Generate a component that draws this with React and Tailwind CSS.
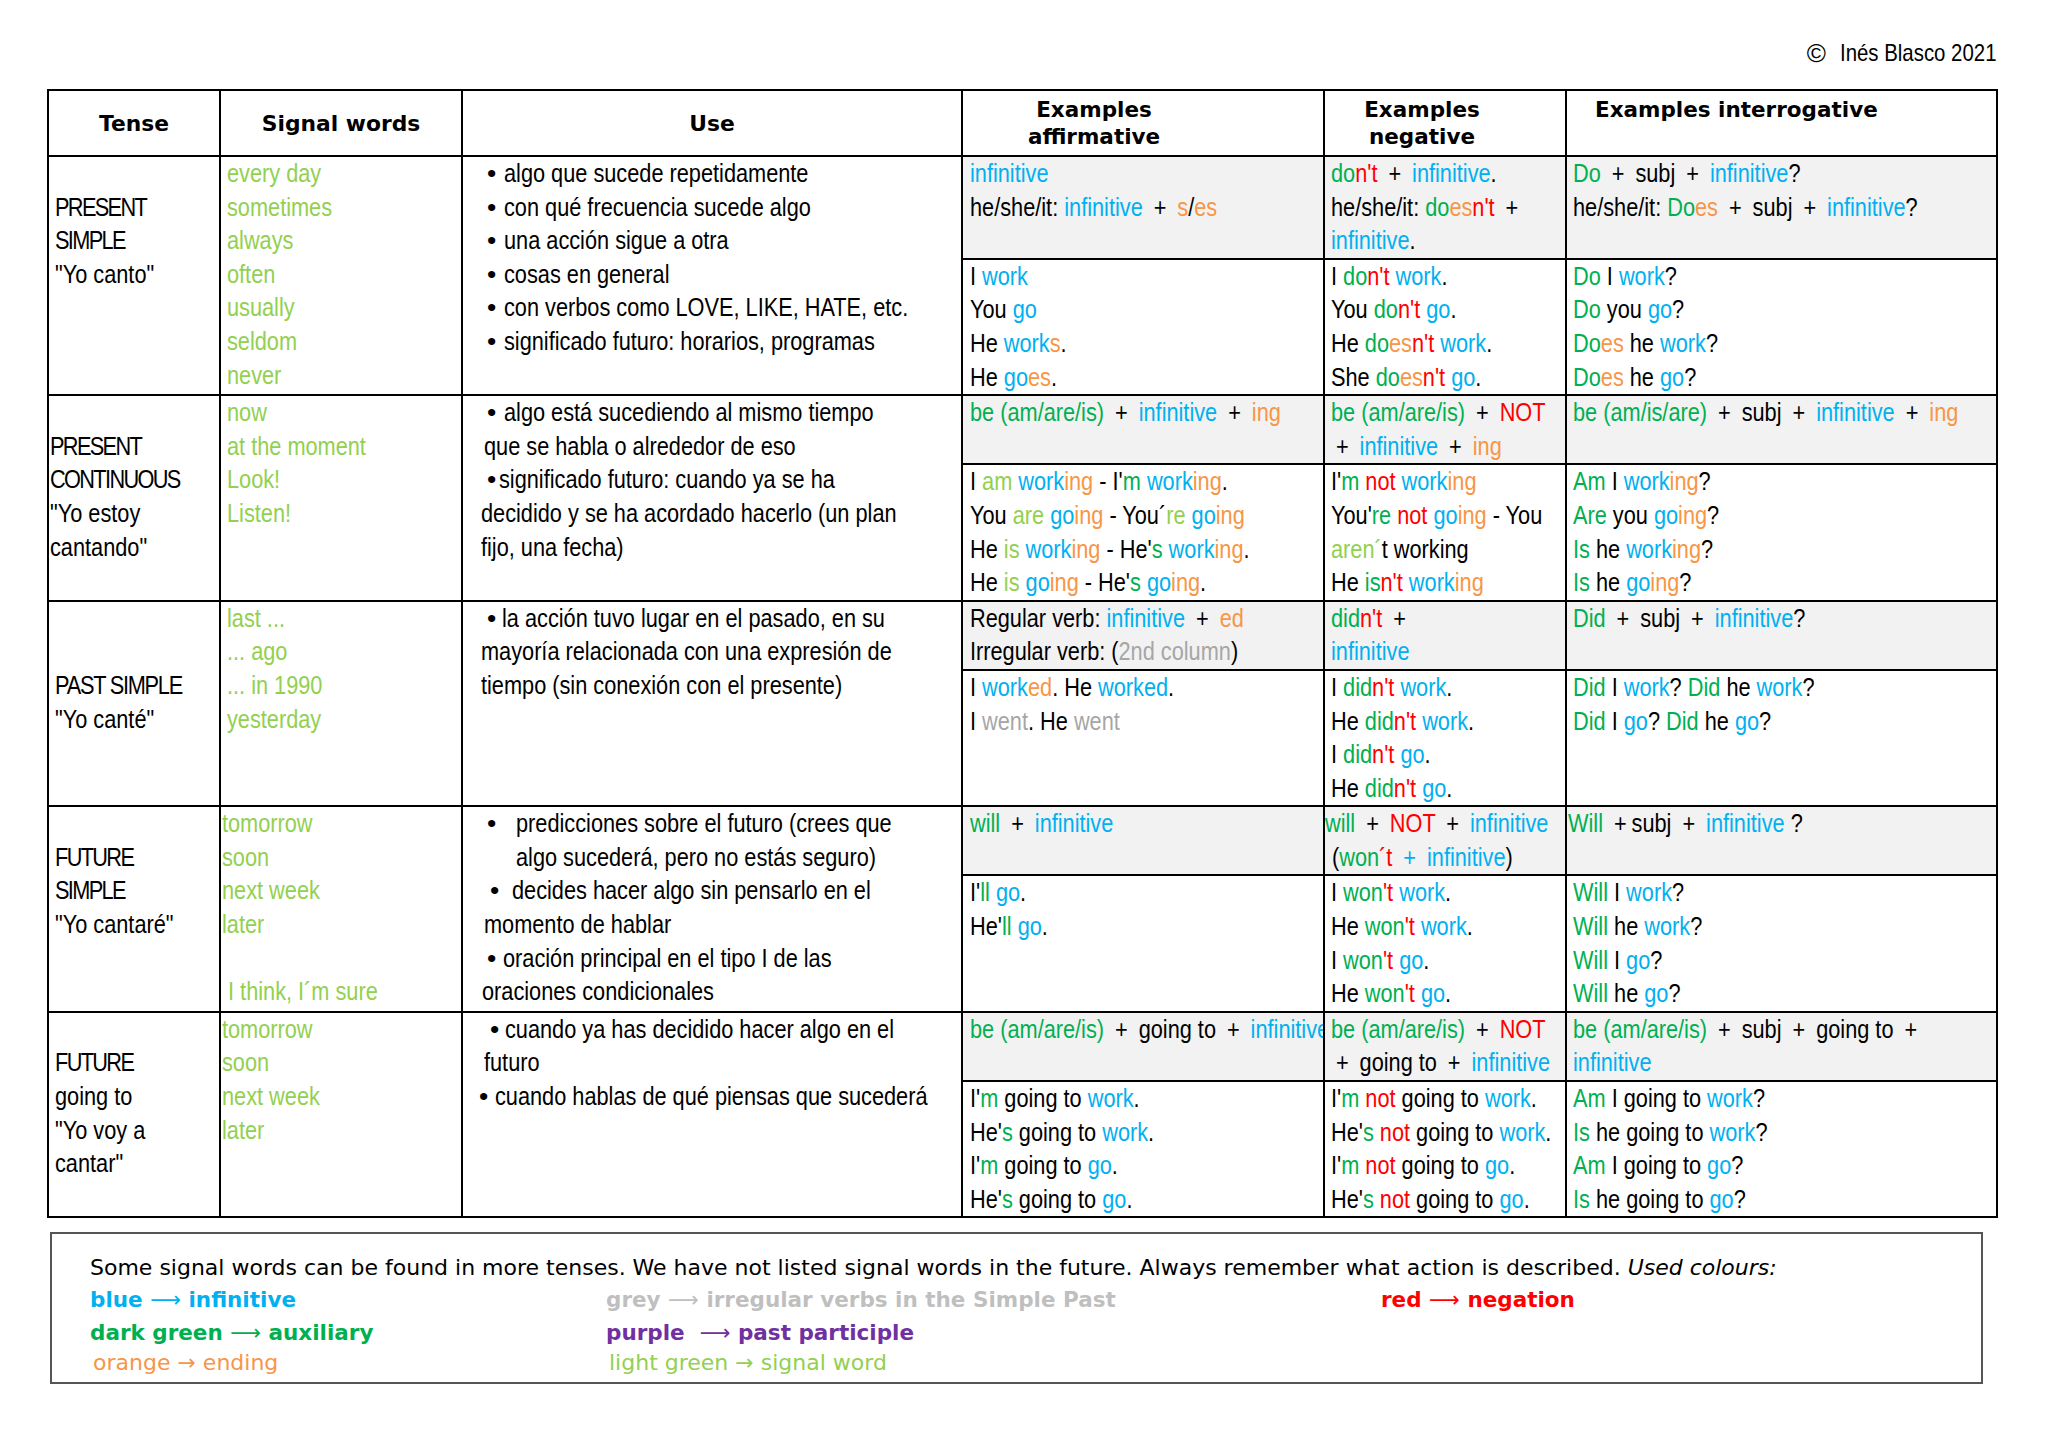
const C = {
  k: "text-black",
  b: "text-[#00b0f0]",
  g: "text-[#00b050]",
  r: "text-[#ff0000]",
  o: "text-[#f79646]",
  y: "text-[#a6a6a6]",
  l: "text-[#92d050]",
};

// no narrow face is installed, so Liberation Sans is squeezed to Arial Narrow proportions
const narrow = "origin-left scale-x-[0.82] whitespace-pre";

// "[g]do[r]n't[k] + [b]infinitive" -> coloured spans, "+" gets a bit of air like the original
const Line = ({ s, cls = "" }) => {
  const parts = s.split(/\[([kbgroyl])\]/);
  let color = "k";
  const out = [];
  parts.forEach((p, i) => {
    if (i % 2) {
      color = p;
      return;
    }
    p.split(/(\+)/).forEach((q, j) => {
      if (!q) return;
      out.push(
        <span key={i + "-" + j} className={q === "+" ? C[color] + " px-[6px]" : C[color]}>
          {q}
        </span>
      );
    });
  });
  return <div className={"h-[33.6px] " + narrow + " " + cls}>{out}</div>;
};

const Lines = ({ lines, ml }) =>
  lines.map((l, i) =>
    Array.isArray(l) ? <Line key={i} s={l[0]} cls={l[1]} /> : <Line key={i} s={l} cls={ml} />
  );

const UseLine = ({ ml, bw, t }) => (
  <div className={"flex h-[33.6px] " + ml}>
    {bw && <span className={"shrink-0 " + bw}>•</span>}
    <div className={narrow}>{t}</div>
  </div>
);

const rows = [
  {
    tense: {
      ml: "ml-[6px]",
      lines: ["", ["PRESENT", "ml-[6px] tracking-[-2px]"], ["SIMPLE", "ml-[6px] tracking-[-2px]"], '"Yo canto"'],
    },
    signal: { ml: "ml-[6px]", lines: ["every day", "sometimes", "always", "often", "usually", "seldom", "never"] },
    use: [
      { ml: "ml-[8px]", bw: "w-[17px]", t: "algo que sucede repetidamente" },
      { ml: "ml-[8px]", bw: "w-[17px]", t: "con qué frecuencia sucede algo" },
      { ml: "ml-[8px]", bw: "w-[17px]", t: "una acción sigue a otra" },
      { ml: "ml-[8px]", bw: "w-[17px]", t: "cosas en general" },
      { ml: "ml-[8px]", bw: "w-[17px]", t: "con verbos como LOVE, LIKE, HATE, etc." },
      { ml: "ml-[8px]", bw: "w-[17px]", t: "significado futuro: horarios, programas" },
    ],
    gray: [
      ["[b]infinitive", "he/she/it: [b]infinitive[k] + [o]s[k]/[o]es"],
      ["[g]do[r]n't[k] + [b]infinitive[k].", "he/she/it: [g]do[o]es[r]n't[k] +", "[b]infinitive[k]."],
      ["[g]Do[k] + subj + [b]infinitive[k]?", "he/she/it: [g]Do[o]es[k] + subj + [b]infinitive[k]?"],
    ],
    white: [
      ["I [b]work", "You [b]go", "He [b]work[o]s[k].", "He [b]go[o]es[k]."],
      ["I [g]do[r]n't[k] [b]work[k].", "You [g]do[r]n't[k] [b]go[k].", "He [g]do[o]es[r]n't[k] [b]work[k].", "She [g]do[o]es[r]n't[k] [b]go[k]."],
      ["[g]Do[k] I [b]work[k]?", "[g]Do[k] you [b]go[k]?", "[g]Do[o]es[k] he [b]work[k]?", "[g]Do[o]es[k] he [b]go[k]?"],
    ],
  },
  {
    tense: {
      ml: "ml-px",
      lines: ["", ["PRESENT", "ml-px tracking-[-2px]"], ["CONTINUOUS", "ml-px tracking-[-2px]"], '"Yo estoy', 'cantando"'],
    },
    signal: { ml: "ml-[6px]", lines: ["now", "at the moment", "Look!", "Listen!"] },
    use: [
      { ml: "ml-[8px]", bw: "w-[17px]", t: "algo está sucediendo al mismo tiempo" },
      { ml: "ml-[5px]", t: "que se habla o alrededor de eso" },
      { ml: "ml-[8px]", bw: "w-[12px]", t: "significado futuro: cuando ya se ha" },
      { ml: "ml-[2px]", t: "decidido y se ha acordado hacerlo (un plan" },
      { ml: "ml-[2px]", t: "fijo, una fecha)" },
    ],
    gray: [
      ["[g]be (am/are/is)[k] + [b]infinitive[k] + [o]ing"],
      ["[g]be (am/are/is)[k] + [r]NOT", "+ [b]infinitive[k] + [o]ing"],
      ["[g]be (am/is/are)[k] + subj + [b]infinitive[k] + [o]ing"],
    ],
    white: [
      [
        "I [l]am[k] [b]work[o]ing[k] - I'[g]m[k] [b]work[o]ing[k].",
        "You [l]are[k] [b]go[o]ing[k] - You´[l]re[k] [b]go[o]ing",
        "He [l]is[k] [b]work[o]ing[k] - He'[g]s[k] [b]work[o]ing[k].",
        "He [l]is[k] [b]go[o]ing[k] - He'[g]s[k] [b]go[o]ing[k].",
      ],
      ["I'[g]m[k] [r]not[k] [b]work[o]ing", "You'[g]re[k] [r]not[k] [b]go[o]ing[k] - You", "[l]aren´[k]t working", "He [g]is[r]n't[k] [b]work[o]ing"],
      ["[g]Am[k] I [b]work[o]ing[k]?", "[g]Are[k] you [b]go[o]ing[k]?", "[g]Is[k] he [b]work[o]ing[k]?", "[g]Is[k] he [b]go[o]ing[k]?"],
    ],
  },
  {
    tense: { ml: "ml-[6px]", lines: ["", "", ["PAST SIMPLE", "ml-[6px] tracking-[-1.5px]"], '"Yo canté"'] },
    signal: { ml: "ml-[6px]", lines: ["last ...", "... ago", "... in 1990", "yesterday"] },
    use: [
      { ml: "ml-[8px]", bw: "w-[15px]", t: "la acción tuvo lugar en el pasado, en su" },
      { ml: "ml-[2px]", t: "mayoría relacionada con una expresión de" },
      { ml: "ml-[2px]", t: "tiempo (sin conexión con el presente)" },
    ],
    gray: [
      ["Regular verb: [b]infinitive[k] + [o]ed", "Irregular verb: ([y]2nd column[k])"],
      ["[g]did[r]n't[k] +", "[b]infinitive"],
      ["[g]Did[k] + subj + [b]infinitive[k]?"],
    ],
    white: [
      ["I [b]work[o]ed[k]. He [b]worked[k].", "I [y]went[k]. He [y]went"],
      ["I [g]did[r]n't[k] [b]work[k].", "He [g]did[r]n't[k] [b]work[k].", "I [g]did[r]n't[k] [b]go[k].", "He [g]did[r]n't[k] [b]go[k]."],
      ["[g]Did[k] I [b]work[k]? [g]Did[k] he [b]work[k]?", "[g]Did[k] I [b]go[k]? [g]Did[k] he [b]go[k]?"],
    ],
  },
  {
    tense: {
      ml: "ml-[6px]",
      lines: ["", ["FUTURE", "ml-[6px] tracking-[-2px]"], ["SIMPLE", "ml-[6px] tracking-[-2px]"], '"Yo cantaré"'],
    },
    signal: { ml: "ml-px", lines: ["tomorrow", "soon", "next week", "later", "", " I think, I´m sure"] },
    use: [
      { ml: "ml-[8px]", bw: "w-[29px]", t: "predicciones sobre el futuro (crees que" },
      { ml: "ml-[37px]", t: "algo sucederá, pero no estás seguro)" },
      { ml: "ml-[11px]", bw: "w-[22px]", t: "decides hacer algo sin pensarlo en el" },
      { ml: "ml-[5px]", t: "momento de hablar" },
      { ml: "ml-[8px]", bw: "w-[16px]", t: "oración principal en el tipo I de las" },
      { ml: "ml-[3px]", t: "oraciones condicionales" },
    ],
    gray: [
      ["[g]will[k] + [b]infinitive"],
      [["[g]will[k] + [r]NOT[k] + [b]infinitive", "ml-0"], ["([g]won[r]´t[b] + infinitive[k])", "ml-[7px]"]],
      [["[g]Will[k] +subj + [b]infinitive[k] ?", "ml-px"]],
    ],
    white: [
      ["I'[g]ll[k] [b]go[k].", "He'[g]ll[k] [b]go[k]."],
      ["I [g]won[r]'t[k] [b]work[k].", "He [g]won[r]'t[k] [b]work[k].", "I [g]won[r]'t[k] [b]go[k].", "He [g]won[r]'t[k] [b]go[k]."],
      ["[g]Will[k] I [b]work[k]?", "[g]Will[k] he [b]work[k]?", "[g]Will[k] I [b]go[k]?", "[g]Will[k] he [b]go[k]?"],
    ],
  },
  {
    tense: { ml: "ml-[6px]", lines: ["", ["FUTURE", "ml-[6px] tracking-[-2px]"], "going to", '"Yo voy a', 'cantar"'] },
    signal: { ml: "ml-px", lines: ["tomorrow", "soon", "next week", "later"] },
    use: [
      { ml: "ml-[11px]", bw: "w-[15px]", t: "cuando ya has decidido hacer algo en el" },
      { ml: "ml-[5px]", t: "futuro" },
      { ml: "ml-0", bw: "w-[16px]", t: "cuando hablas de qué piensas que sucederá" },
    ],
    gray: [
      ["[g]be (am/are/is)[k] + going to + [b]infinitive"],
      ["[g]be (am/are/is)[k] + [r]NOT", "+ going to + [b]infinitive"],
      ["[g]be (am/are/is)[k] + subj + going to +", "[b]infinitive"],
    ],
    white: [
      ["I'[g]m[k] going to [b]work[k].", "He'[g]s[k] going to [b]work[k].", "I'[g]m[k] going to [b]go[k].", "He'[g]s[k] going to [b]go[k]."],
      ["I'[g]m[k] [r]not[k] going to [b]work[k].", "He'[g]s[k] [r]not[k] going to [b]work[k].", "I'[g]m[k] [r]not[k] going to [b]go[k].", "He'[g]s[k] [r]not[k] going to [b]go[k]."],
      ["[g]Am[k] I going to [b]work[k]?", "[g]Is[k] he going to [b]work[k]?", "[g]Am[k] I going to [b]go[k]?", "[g]Is[k] he going to [b]go[k]?"],
    ],
  },
];

const ExRow = ({ cells, gray }) => (
  <div className={gray ? "flex bg-[#f2f2f2] border-b-2 border-black" : "flex flex-1"}>
    <div className="w-[362px] shrink-0 overflow-hidden border-r-2 border-black">
      <Lines lines={cells[0]} ml="ml-[7px]" />
    </div>
    <div className="w-[242px] shrink-0 overflow-hidden border-r-2 border-black">
      <Lines lines={cells[1]} ml="ml-[6px]" />
    </div>
    <div className="w-[429px] shrink-0 overflow-hidden">
      <Lines lines={cells[2]} ml="ml-[6px]" />
    </div>
  </div>
);

const head = "font-['DejaVu_Sans',sans-serif] font-bold leading-[27px]";

export default function App() {
  return (
    <div className="min-h-screen w-[2048px] bg-white pt-[38px] text-black">
      <div className="flex h-[30px] items-center justify-end pr-[24px] font-['Liberation_Sans',sans-serif] leading-[30px]">
        <span className="mr-[14px] text-[26px]">©</span>
        <div className="origin-left scale-x-[0.85] whitespace-pre text-[24px]">Inés Blasco 2021</div>
      </div>

      <div className="ml-[47px] mt-[21px] w-[1951px] border-2 border-black font-['Liberation_Sans',sans-serif] text-[26.5px] leading-[33.6px]">
        <div className={"flex h-[66px] border-b-2 border-black " + head}>
          <div className="flex w-[172px] shrink-0 items-center justify-center border-r-2 border-black text-[21.8px]">Tense</div>
          <div className="flex w-[242px] shrink-0 items-center justify-center border-r-2 border-black text-[21.8px]">Signal words</div>
          <div className="flex w-[500px] shrink-0 items-center justify-center border-r-2 border-black text-[21.8px]">Use</div>
          <div className="w-[362px] shrink-0 border-r-2 border-black pr-[98px] pt-[5px] text-center text-[21.5px]">
            Examples
            <br />
            affirmative
          </div>
          <div className="w-[242px] shrink-0 border-r-2 border-black pr-[46px] pt-[5px] text-center text-[21.5px]">
            Examples
            <br />
            negative
          </div>
          <div className="w-[429px] shrink-0 pl-[28px] pt-[5px] text-[21.5px]">Examples interrogative</div>
        </div>

        {rows.map((r, i) => (
          <div key={i} className={i < rows.length - 1 ? "flex border-b-2 border-black" : "flex"}>
            <div className="w-[172px] shrink-0 border-r-2 border-black">
              <Lines lines={r.tense.lines} ml={r.tense.ml} />
            </div>
            <div className="w-[242px] shrink-0 border-r-2 border-black">
              <Lines lines={r.signal.lines.map((s) => "[l]" + s)} ml={r.signal.ml} />
            </div>
            <div className="w-[500px] shrink-0 border-r-2 border-black pl-[16px]">
              {r.use.map((u, j) => (
                <UseLine key={j} {...u} />
              ))}
            </div>
            <div className="flex w-[1033px] shrink-0 flex-col">
              <ExRow cells={r.gray} gray />
              <ExRow cells={r.white} />
            </div>
          </div>
        ))}
      </div>

      <div className="ml-[50px] mt-[14px] h-[152px] w-[1933px] border-2 border-[#555] pl-[38px] pt-[18px] font-['DejaVu_Sans',sans-serif] text-[22px]">
        <div className="h-[32px] whitespace-nowrap leading-[32px]">
          Some signal words can be found in more tenses. We have not listed signal words in the future. Always remember what action is described.{" "}
          <i>Used colours:</i>
        </div>
        <div className="grid h-[32px] grid-cols-[516px_775px_1fr] text-[21.5px] font-bold leading-[32px]">
          <div className="text-[#00b0f0]">
            blue <span className="font-normal">⟶</span> infinitive
          </div>
          <div className="text-[#bfbfbf]">
            grey <span className="font-normal">⟶</span> irregular verbs in the Simple Past
          </div>
          <div className="text-[#ff0000]">
            red <span className="font-normal">⟶</span> negation
          </div>
        </div>
        <div className="grid h-[34px] grid-cols-[516px_775px_1fr] text-[21.5px] font-bold leading-[34px]">
          <div className="text-[#00b050]">
            dark green <span className="font-normal">⟶</span> auxiliary
          </div>
          <div className="whitespace-pre text-[#7030a0]">
            purple  <span className="font-normal">⟶</span> past participle
          </div>
        </div>
        <div className="grid h-[26px] grid-cols-[516px_775px_1fr] leading-[26px]">
          <div className="pl-[3px] text-[#f79646]">orange → ending</div>
          <div className="pl-[3px] text-[#92d050]">light green → signal word</div>
        </div>
      </div>
    </div>
  );
}
